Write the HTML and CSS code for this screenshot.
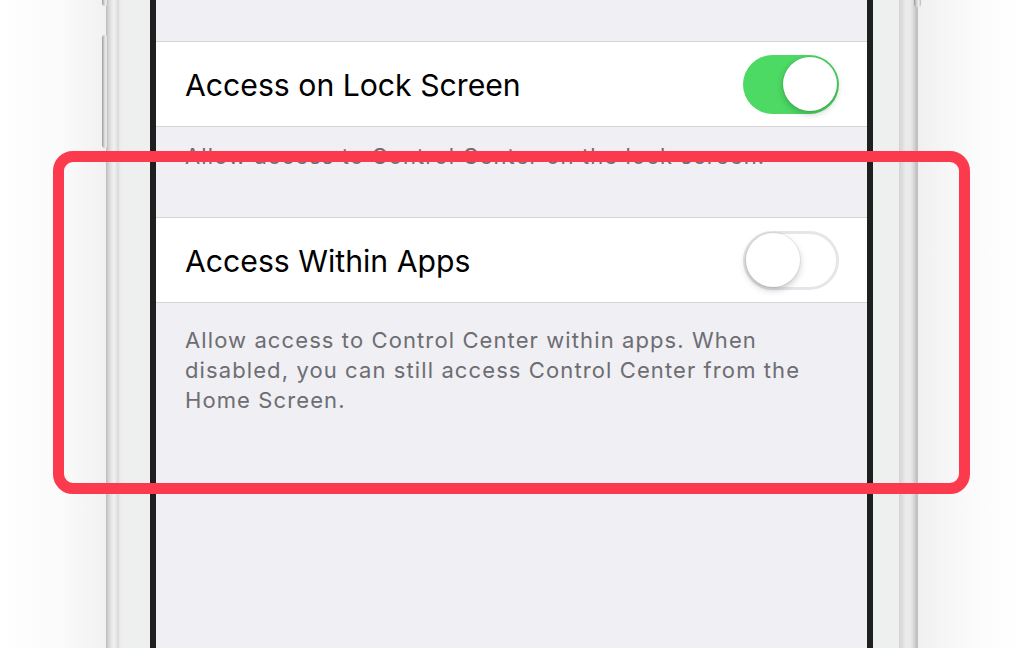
FILE: index.html
```html
<!DOCTYPE html>
<html>
<head>
<meta charset="utf-8">
<link rel="stylesheet" href="styles.css">
</head>
<body>
<div class="page">
  <div class="outer outer-left"></div>
  <div class="bezel bezel-left">
    <span class="btn btn-top-left"></span>
    <span class="btn btn-side-left"></span>
  </div>
  <div class="frame"></div>
  <div class="edge"></div>
  <div class="screen">
    <div class="top-gap"></div>
    <div class="row">
      <span class="label">Access on Lock Screen</span>
      <span class="toggle on"><span class="knob"></span></span>
    </div>
    <div class="footer footer-one">Allow access to Control Center on the lock screen.</div>
    <div class="row">
      <span class="label">Access Within Apps</span>
      <span class="toggle off"><span class="knob"></span></span>
    </div>
    <div class="footer footer-two">Allow access to Control Center within apps. When disabled, you can still access Control Center from the Home Screen.</div>
  </div>
  <div class="edge"></div>
  <div class="frame frame-right"></div>
  <div class="bezel bezel-right">
    <span class="btn btn-top-right"></span>
  </div>
  <div class="outer outer-right"></div>
  <div class="highlight"></div>
</div>
</body>
</html>
```

FILE: styles.css
```css
html, body {
  margin: 0;
  padding: 0;
  width: 1024px;
  height: 648px;
  overflow: hidden;
  background: #ffffff;
}

.page {
  position: relative;
  display: flex;
  width: 1024px;
  height: 648px;
  font-family: "Inter", "Liberation Sans", sans-serif;
}

.outer-left {
  width: 106px;
  background: linear-gradient(to right, #ffffff 0%, #fafafa 60%, #f1f1f1 100%);
}

.outer-right {
  flex: 1;
  background: linear-gradient(to right, #f0f0f0 0%, #f7f7f7 30%, #fdfdfd 70%, #ffffff 100%);
}

.bezel {
  position: relative;
}

.bezel-left {
  width: 17px;
  background: linear-gradient(to right, #b9b9b9 0px, #cfcfcf 2px, #e4e4e4 5px, #f2f2f2 8px, #e2e2e2 11px, #d9d9d9 12px, #ececec 14px, #eeeeee 17px);
}

.bezel-right {
  width: 19px;
  background: linear-gradient(to right, #d4d4d4 0px, #dcdcdc 3px, #ececec 7px, #e8e8e8 12px, #d6d6d6 15px, #bcbcbc 18px, #c8c8c8 19px);
}

.frame {
  width: 27px;
  background: #eeefef;
}

.frame-right {
  width: 26px;
}

.edge {
  width: 6px;
  background: #1f1f1f;
}

.btn {
  position: absolute;
  display: block;
  background: linear-gradient(to right, #9a9a9a, #d8d8d8 40%, #efefef 70%, #b5b5b5);
  border-radius: 3px;
}

.btn-top-left {
  left: -4px;
  top: -4px;
  width: 6px;
  height: 10px;
}

.btn-side-left {
  left: -4px;
  top: 35px;
  width: 6px;
  height: 113px;
}

.btn-top-right {
  left: 15px;
  top: -4px;
  width: 7px;
  height: 11px;
}

.screen {
  width: 711px;
  background: #efeff4;
  display: flex;
  flex-direction: column;
}

.top-gap {
  height: 41px;
}

.row {
  height: 84px;
  background: #ffffff;
  border-top: 1px solid #d3d3d8;
  border-bottom: 1px solid #d3d3d8;
  display: flex;
  align-items: center;
  justify-content: space-between;
  padding: 0 28px 0 29px;
}

.label {
  font-size: 30.2px;
  color: #000000;
  padding-top: 2px;
}

.footer {
  font-size: 22px;
  line-height: 30px;
  color: #6d6d72;
  padding-left: 29px;
  padding-right: 50px;
  letter-spacing: 1.1px;
}

.footer-one {
  height: 90px;
  box-sizing: border-box;
  padding-top: 14px;
}

.footer-two {
  padding-top: 22px;
}

.toggle {
  position: relative;
  display: block;
  width: 96px;
  height: 59px;
  border-radius: 30px;
  box-sizing: border-box;
}

.toggle.on {
  background: #4cd964;
}

.toggle.off {
  background: #ffffff;
  border: 3px solid #e6e6ea;
}

.knob {
  position: absolute;
  width: 54px;
  height: 54px;
  border-radius: 50%;
  background: #ffffff;
  box-shadow: 0 3px 7px rgba(0, 0, 0, 0.22), 0 0 0 1px rgba(0, 0, 0, 0.05);
}

.toggle.on .knob {
  right: 2px;
  top: 2px;
}

.toggle.off .knob {
  left: 0px;
  top: -1px;
}

.highlight {
  position: absolute;
  left: 53px;
  top: 151px;
  width: 917px;
  height: 343px;
  box-sizing: border-box;
  border: 11px solid #fc3a4d;
  border-radius: 20px;
}
```
